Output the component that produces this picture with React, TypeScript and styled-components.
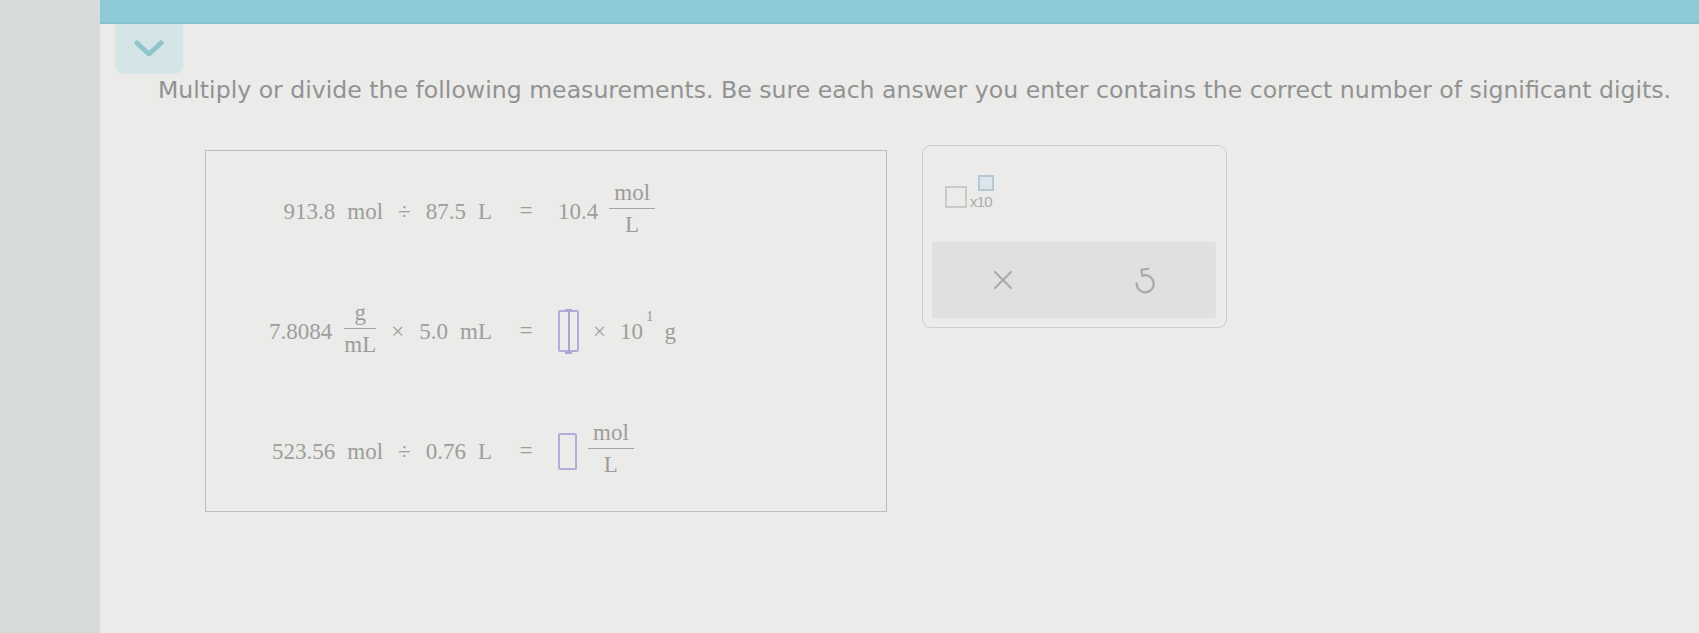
import React from "react";
import styled, { createGlobalStyle } from "styled-components";

const Global = createGlobalStyle`
  html, body { margin: 0; padding: 0; background: #ebebe9; }
  #root { width: 1699px; height: 633px; overflow: hidden; }
`;

const Page = styled.div`
  display: flex;
  width: 1699px;
  height: 633px;
  background: #ebebe9;
`;

const Sidebar = styled.div`
  width: 100px;
  flex: none;
  background: #d5dbdb;
`;

const Main = styled.div`
  flex: 1;
  display: flex;
  flex-direction: column;
  min-width: 0;
`;

const TopBar = styled.div`
  height: 22px;
  background: #8dcad6;
  border-bottom: 2px solid #86c2ce;
`;

const Tab = styled.button`
  margin-left: 15px;
  width: 68px;
  height: 50px;
  border: none;
  padding: 0;
  background: #d3e5e7;
  border-radius: 0 0 9px 9px;
  display: flex;
  align-items: center;
  justify-content: center;
`;

const Question = styled.p`
  margin: 2px 0 0 58px;
  font-family: "DejaVu Sans", Verdana, sans-serif;
  font-size: 23.6px;
  line-height: 28px;
  color: #929292;
  white-space: nowrap;
`;

const Work = styled.div`
  display: flex;
  align-items: flex-start;
  margin-top: 41px;
`;

const EqBox = styled.div`
  margin-left: 105px;
  margin-top: 5px;
  width: 682px;
  height: 362px;
  box-sizing: border-box;
  border: 1.5px solid #bdbdbb;
  display: grid;
  grid-template-columns: 227px 66px auto;
  grid-auto-rows: 80px;
  row-gap: 40px;
  padding: 20px 0 0 59px;
  font-family: "Liberation Serif", "Times New Roman", serif;
  font-size: 23px;
  color: #9d9d9c;
`;

const Side = styled.div<{ $align: "end" | "start" }>`
  display: flex;
  align-items: center;
  justify-content: ${(p) => (p.$align === "end" ? "flex-end" : "flex-start")};
  gap: ${(p) => (p.$align === "end" ? 12 : 11)}px;
  line-height: 27px;
  white-space: nowrap;
`;

const EqSign = styled.div`
  display: flex;
  align-items: center;
  justify-content: center;
  padding-left: 2px;
`;

const Tok = styled.span``;

const Op = styled.span`
  margin: 0 3px;
`;

const Frac = styled.span`
  display: inline-flex;
  flex-direction: column;
  align-items: center;
  line-height: 27px;
  margin-top: -5px;
`;

const Numer = styled.span`
  padding: 0 5px 2px;
  border-bottom: 1.5px solid #a3a3a2;
  align-self: stretch;
  text-align: center;
`;

const Denom = styled.span`
  padding-top: 2px;
`;

const Sup = styled.span`
  align-self: flex-start;
  margin-top: 18px;
  margin-left: -8px;
  font-size: 15px;
  line-height: 15px;
`;

const Slot = styled.span<{ $w: number; $h: number; $cursor?: boolean }>`
  position: relative;
  display: inline-block;
  width: ${(p) => p.$w}px;
  height: ${(p) => p.$h}px;
  box-sizing: border-box;
  border: 2px solid #afaed8;
  border-radius: 2px;
  ${(p) =>
    p.$cursor
      ? `
  &::after {
    content: "";
    position: absolute;
    left: 50%;
    top: -2px;
    bottom: -2px;
    width: 2px;
    margin-left: -1px;
    background: #a7a6d4;
  }
  &::before {
    content: "";
    position: absolute;
    left: 50%;
    top: -3px;
    width: 7px;
    margin-left: -3.5px;
    height: 2px;
    background: #a7a6d4;
    box-shadow: 0 ${p.$h + 1}px 0 #a7a6d4;
  }`
      : ""}
`;

const Panel = styled.div`
  margin-left: 35px;
  width: 305px;
  height: 183px;
  box-sizing: border-box;
  border: 1.5px solid #cdcdcb;
  border-radius: 9px;
  display: flex;
  flex-direction: column;
  padding: 0 10px 9px 9px;
`;

const Widget = styled.div`
  display: flex;
  align-items: flex-start;
  margin: 29px 0 0 13px;
  font-family: "Liberation Sans", Arial, sans-serif;
`;

const BaseBox = styled.span`
  width: 22px;
  height: 22px;
  box-sizing: border-box;
  border: 2px solid #c9c9c8;
  margin-top: 11px;
`;

const X10 = styled.span`
  margin: 19px 0 0 3px;
  font-size: 15px;
  line-height: 15px;
  color: #ababab;
  letter-spacing: -0.8px;
`;

const ExpBox = styled.span`
  width: 16px;
  height: 16px;
  box-sizing: border-box;
  border: 2px solid #b7c7d0;
  background: #d9e6ed;
  margin-left: -14px;
`;

const ButtonBar = styled.div`
  margin-top: auto;
  height: 76px;
  background: #e0e0de;
  border-radius: 3px;
  display: grid;
  grid-template-columns: 1fr 1fr;
`;

const IconButton = styled.button`
  border: none;
  background: transparent;
  padding: 0;
  display: flex;
  align-items: center;
  justify-content: center;
`;

const Chevron = () => (
  <svg width="30" height="18" viewBox="0 0 30 18">
    <path d="M3 3 L15 14 L27 3" fill="none" stroke="#90c5ce" strokeWidth="5" strokeLinecap="round" strokeLinejoin="round" />
  </svg>
);

const XIcon = () => (
  <svg width="22" height="22" viewBox="0 0 22 22">
    <path d="M3 3 L19 19 M19 3 L3 19" stroke="#a9a9a8" strokeWidth="2" strokeLinecap="round" />
  </svg>
);

const UndoIcon = () => (
  <svg width="26" height="30" viewBox="0 0 24 28">
    <path d="M15 3.5 L8.5 4.5 L9.5 10" fill="none" stroke="#a9a9a8" strokeWidth="2" strokeLinecap="round" strokeLinejoin="round" />
    <path d="M9.5 10 A8 8 0 1 1 4.2 17" fill="none" stroke="#a9a9a8" strokeWidth="2" strokeLinecap="round" />
  </svg>
);

const Fraction = ({ n, d }: { n: string; d: string }) => (
  <Frac>
    <Numer>{n}</Numer>
    <Denom>{d}</Denom>
  </Frac>
);

export default function App() {
  return (
    <>
      <Global />
      <Page>
        <Sidebar />
        <Main>
          <TopBar />
          <Tab aria-label="collapse">
            <Chevron />
          </Tab>
          <Question>
            Multiply or divide the following measurements. Be sure each answer you enter contains the correct number of significant digits.
          </Question>
          <Work>
            <EqBox>
              <Side $align="end">
                <Tok>913.8</Tok>
                <Tok>mol</Tok>
                <Op>÷</Op>
                <Tok>87.5</Tok>
                <Tok>L</Tok>
              </Side>
              <EqSign>=</EqSign>
              <Side $align="start">
                <Tok>10.4</Tok>
                <Fraction n="mol" d="L" />
              </Side>

              <Side $align="end">
                <Tok>7.8084</Tok>
                <Fraction n="g" d="mL" />
                <Op>×</Op>
                <Tok>5.0</Tok>
                <Tok>mL</Tok>
              </Side>
              <EqSign>=</EqSign>
              <Side $align="start">
                <Slot $w={21} $h={42} $cursor />
                <Op>×</Op>
                <Tok>10</Tok>
                <Sup>1</Sup>
                <Tok>g</Tok>
              </Side>

              <Side $align="end">
                <Tok>523.56</Tok>
                <Tok>mol</Tok>
                <Op>÷</Op>
                <Tok>0.76</Tok>
                <Tok>L</Tok>
              </Side>
              <EqSign>=</EqSign>
              <Side $align="start">
                <Slot $w={19} $h={37} />
                <Fraction n="mol" d="L" />
              </Side>
            </EqBox>
            <Panel>
              <Widget>
                <BaseBox />
                <X10>x10</X10>
                <ExpBox />
              </Widget>
              <ButtonBar>
                <IconButton aria-label="clear">
                  <XIcon />
                </IconButton>
                <IconButton aria-label="undo">
                  <UndoIcon />
                </IconButton>
              </ButtonBar>
            </Panel>
          </Work>
        </Main>
      </Page>
    </>
  );
}
